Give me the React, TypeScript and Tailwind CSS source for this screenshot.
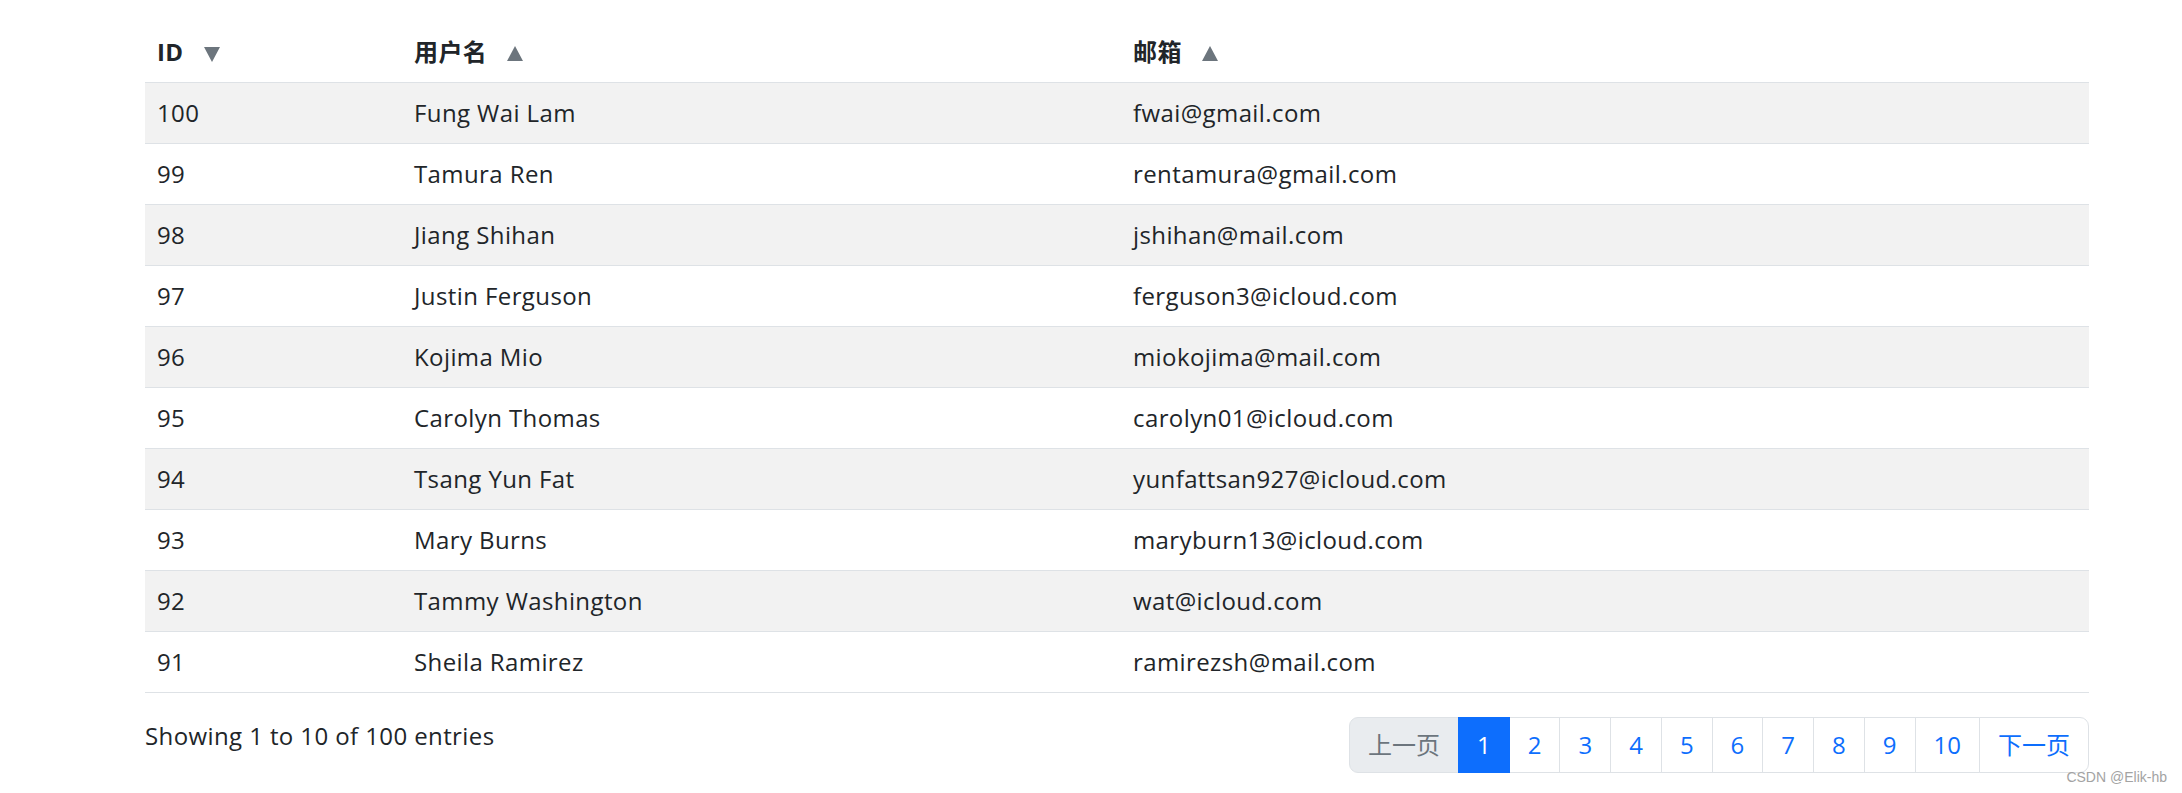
import React from "react";

const rows: [number, string, string][] = [
  [100, "Fung Wai Lam", "fwai@gmail.com"],
  [99, "Tamura Ren", "rentamura@gmail.com"],
  [98, "Jiang Shihan", "jshihan@mail.com"],
  [97, "Justin Ferguson", "ferguson3@icloud.com"],
  [96, "Kojima Mio", "miokojima@mail.com"],
  [95, "Carolyn Thomas", "carolyn01@icloud.com"],
  [94, "Tsang Yun Fat", "yunfattsan927@icloud.com"],
  [93, "Mary Burns", "maryburn13@icloud.com"],
  [92, "Tammy Washington", "wat@icloud.com"],
  [91, "Sheila Ramirez", "ramirezsh@mail.com"],
];

function Arrow({ down }: { down?: boolean }) {
  return (
    <svg
      width="16"
      height="16"
      viewBox="0 0 16 16"
      className="inline-block ml-[20px] align-[-1px]"
    >
      {down ? (
        <path d="M0 1 L16 1 L8 16 Z" fill="#6c757d" />
      ) : (
        <path d="M8 0 L16 15 L0 15 Z" fill="#6c757d" />
      )}
    </svg>
  );
}

const pages = ["1", "2", "3", "4", "5", "6", "7", "8", "9", "10"];

const cell = "px-3 py-3 border-b border-[#dee2e6]";

export default function App() {
  return (
    <div className="relative min-h-[793px] w-full bg-white text-[#212529] font-['Open_Sans','Noto_Sans_CJK_SC',sans-serif] text-[24px] leading-[36px]">
      <div className="pt-[22px] pl-[145px]">
        <div className="w-[1944px]">
          <table className="w-full table-fixed border-separate border-spacing-0 tracking-[0.4px]">
            <colgroup>
              <col className="w-[257px]" />
              <col className="w-[719px]" />
              <col className="w-[968px]" />
            </colgroup>
            <thead>
              <tr>
                <th className={`${cell} text-left font-bold`}>
                  ID
                  <Arrow down />
                </th>
                <th className={`${cell} text-left font-bold`}>
                  用户名
                  <Arrow />
                </th>
                <th className={`${cell} text-left font-bold`}>
                  邮箱
                  <Arrow />
                </th>
              </tr>
            </thead>
            <tbody>
              {rows.map((r, i) => (
                <tr key={r[0]} className={i % 2 === 0 ? "bg-[#f2f2f2]" : "bg-white"}>
                  <td className={cell}>{r[0]}</td>
                  <td className={cell}>{r[1]}</td>
                  <td className={cell}>{r[2]}</td>
                </tr>
              ))}
            </tbody>
          </table>
          <div className="mt-[24px] flex items-start justify-between">
            <div className="pt-px tracking-[0.4px]">Showing 1 to 10 of 100 entries</div>
            <ul className="flex">
              <li className="rounded-l-[9px] border border-[#dee2e6] bg-[#e9ecef] px-[18px] py-[9px] text-[#6c757d]">
                上一页
              </li>
              {pages.map((p) => (
                <li
                  key={p}
                  className={
                    p === "1"
                      ? "relative z-10 -ml-px border border-[#0d6efd] bg-[#0d6efd] px-[18px] py-[9px] text-white"
                      : "-ml-px border border-[#dee2e6] bg-white px-[18px] py-[9px] text-[#0d6efd]"
                  }
                >
                  {p}
                </li>
              ))}
              <li className="-ml-px rounded-r-[9px] border border-[#dee2e6] bg-white px-[18px] py-[9px] text-[#0d6efd]">
                下一页
              </li>
            </ul>
          </div>
        </div>
      </div>
      <div className="absolute right-[15px] bottom-[8px] font-['Liberation_Sans',sans-serif] text-[14px] leading-[16px] text-[#a3a3a3]">
        CSDN @Elik-hb
      </div>
    </div>
  );
}
